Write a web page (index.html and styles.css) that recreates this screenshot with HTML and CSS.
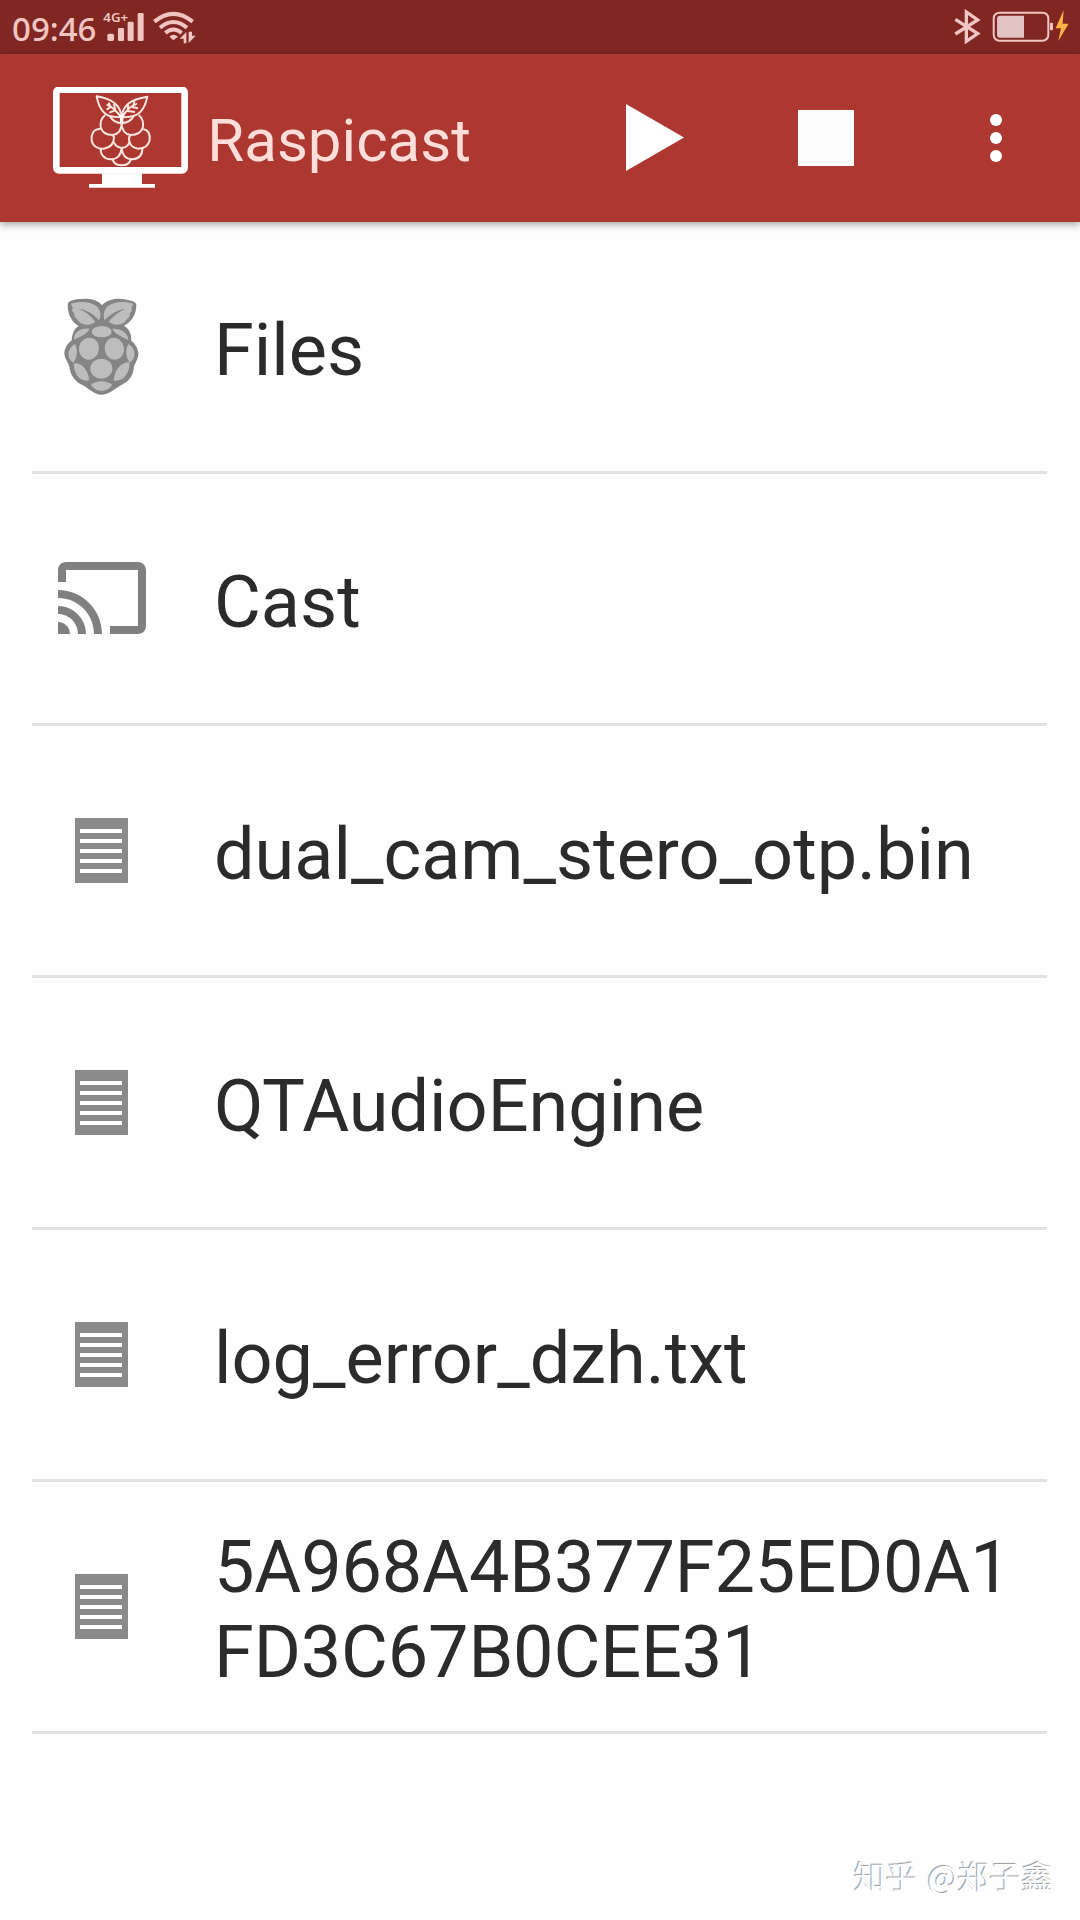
FILE: index.html
```
<!DOCTYPE html>
<html lang="zh">
<head>
    <meta charset="UTF-8">
    <meta name="viewport" content="width=device-width, initial-scale=1.0">
    <title>Raspicast</title>
    <link rel="stylesheet" href="styles.css">
</head>
<body>
    <div class="status-bar">
        <span class="time">09:46</span>
        <svg class="signal" viewBox="310 30 126 100">
            <text x="311" y="67" class="net">4G+</text>
            <rect x="323" y="101" width="20" height="22" rx="5"/>
            <rect x="355" y="84" width="18" height="39" rx="4"/>
            <rect x="384" y="65" width="18" height="58" rx="4"/>
            <rect x="414" y="39" width="18" height="84" rx="4"/>
        </svg>
        <svg class="wifi" viewBox="460 30 132 105">
            <g fill="none" stroke="#f1c6c2" stroke-width="12">
                <path d="M464 65Q521 18 579 65"/>
                <path d="M481 83Q521 49 562 83"/>
                <path d="M497 99Q521 78 546 99"/>
            </g>
            <path d="M509 110Q521 99 535 110L521 121ZM540 116L560 96V130H552V116ZM567 95V129L588 107H577V95Z"/>
        </svg>
        <svg class="bluetooth" viewBox="100 28 86 106">
            <path d="M107 59L174 102L140 125V37L174 61L107 103" fill="none" stroke="#f1c6c2" stroke-width="10"/>
        </svg>
        <svg class="battery" viewBox="216 28 234 106">
            <rect x="221" y="39" width="164" height="84" rx="17" fill="none" stroke="#f1c6c2" stroke-width="6"/>
            <path d="M240 48H312V114H240Q231 114 231 105V57Q231 48 240 48Z" fill="#e3c3c2"/>
            <rect x="390" y="69" width="9" height="23" rx="3"/>
            <path d="M431 32L407 86H423L415 124L446 72H428Z" fill="#ffb545"/>
        </svg>
    </div>

    <div class="toolbar">
        <svg class="logo" viewBox="39 37 406 303">
            <rect x="49" y="45" width="385" height="242" rx="8" fill="none" stroke="#fff" stroke-width="20"/>
            <path d="M186 296H306V328H345V339H147V328H186Z" fill="#fff"/>
            <g class="berry">
                <path d="M245 128C242 94 222 74 170 65C177 101 193 125 222 126C233 126 239 129 245 128Z"/>
                <path d="M245 128C248 94 269 74 322 66C315 101 299 125 268 126C257 126 251 129 245 128Z"/>
                <path d="M200 90Q225 100 245 131Q262 98 291 87M206 84L212 97L200 105M222 88L226 107L208 114M283 80L279 98L294 101M265 90L263 109L285 112"/>
                <path d="M196 121Q179 134 182 157Q188 181 218 181Q245 177 245 146Q220 144 210 125"/>
                <path d="M296 121Q312 134 309 157Q302 181 272 181Q245 177 245 146Q271 144 281 125"/>
                <path d="M182 163C160 161 153 180 155 197C158 215 175 224 192 222C211 219 222 206 222 188L218 181"/>
                <path d="M309 163C326 166 331 180 329 197C325 215 311 222 295 222C276 219 266 206 267 188L272 181"/>
                <path d="M222 203Q226 217 245 220Q264 218 268 203"/>
                <path d="M182 221C181 241 194 254 213 254C232 253 243 241 245 220C247 241 258 254 278 254C297 252 308 241 307 220"/>
                <path d="M217 254Q224 272 245 272Q267 272 273 254"/>
            </g>
            <path d="M232 112L245 123L258 112L250 128V146H240V128Z" fill="#fff"/>
        </svg>
        <h1 class="title">Raspicast</h1>
        <svg class="play" viewBox="0 0 58 67"><path d="M0 0L58 33.5L0 67Z"/></svg>
        <div class="stop"></div>
        <div class="more"><i></i><i></i><i></i></div>
    </div>

    <div class="list">
        <div class="row">
            <div class="icon">
                <svg class="raspberry" viewBox="74 52 225 291">
                    <path fill="#858585" d="M188 74C175 54 139 51 112 56C99 59 85 61 85 73C85 102 98 125 118 136C102 145 98 164 97 179C83 190 75 203 75 221C77 235 86 244 90 257C92 282 105 302 129 313C149 323 163 342 187 342C209 342 223 326 246 313C271 301 282 285 284 257C289 244 298 233 297 217C296 201 286 188 276 180C276 159 270 144 254 135C278 123 291 102 291 71C285 60 270 60 257 56C229 51 203 57 188 74Z"/>
                    <g fill="#bdbdbd">
                        <path d="M95 69C122 61 154 62 172 77C185 90 186 108 179 119C160 97 140 88 119 84C140 94 157 107 168 123C147 139 123 133 113 116L106 108L104 98L98 90L100 81Z"/>
                        <path d="M282 69C255 61 223 62 205 77C192 90 191 108 196 119C216 97 237 88 258 84C237 94 220 107 208 123C230 139 253 133 263 116L270 108L272 98L278 90L276 81Z"/>
                        <ellipse cx="187" cy="153" rx="30" ry="17"/>
                        <path d="M104 177C104 154 123 141 151 144C143 160 125 167 104 177Z"/>
                        <path d="M267 178C267 158 248 143 219 144C226 160 246 167 267 178Z"/>
                        <ellipse cx="149" cy="204" rx="30" ry="33" transform="rotate(12 149 204)"/>
                        <ellipse cx="225" cy="204" rx="29" ry="33" transform="rotate(-12 225 204)"/>
                        <path d="M107 190C116 208 114 230 102 246C80 233 83 203 107 190Z"/>
                        <path d="M267 190C257 208 259 230 271 246C292 233 290 203 267 190Z"/>
                        <ellipse cx="186" cy="264" rx="33" ry="30"/>
                        <path d="M104 248C126 245 148 268 149 299C121 306 102 277 104 248Z"/>
                        <path d="M270 245C248 243 224 268 223 300C251 305 273 276 270 245Z"/>
                        <path d="M155 312C171 298 203 298 218 312C205 336 168 336 155 312Z"/>
                    </g>
                </svg>
            </div>
            <div class="name">Files</div>
        </div>
        <div class="row">
            <div class="icon">
                <svg class="cast" viewBox="0 0 24 24">
                    <path d="M21 3H3c-1.100 0-2 .9-2 2v3h2V5h18v14h-7v2h7c1.100 0 2-.9 2-2V5c0-1.100-.9-2-2-2zM1 18v3h3c0-1.660-1.340-3-3-3zm0-4v2c2.760 0 5 2.240 5 5h2c0-3.870-3.130-7-7-7zm0-4v2c4.970 0 9 4.030 9 9h2c0-6.080-4.930-11-11-11z"/>
                </svg>
            </div>
            <div class="name">Cast</div>
        </div>
        <div class="row">
            <div class="icon"><div class="doc"><i></i><i></i><i></i><i></i><i></i></div></div>
            <div class="name">dual_cam_stero_otp.bin</div>
        </div>
        <div class="row">
            <div class="icon"><div class="doc"><i></i><i></i><i></i><i></i><i></i></div></div>
            <div class="name">QTAudioEngine</div>
        </div>
        <div class="row">
            <div class="icon"><div class="doc"><i></i><i></i><i></i><i></i><i></i></div></div>
            <div class="name">log_error_dzh.txt</div>
        </div>
        <div class="row">
            <div class="icon"><div class="doc"><i></i><i></i><i></i><i></i><i></i></div></div>
            <div class="name hash">5A968A4B377F25ED0A1FD3C67B0CEE31</div>
        </div>
    </div>

    <div class="watermark">知乎 @郑子鑫</div>
</body>
</html>
```
FILE: styles.css
```
* {
    box-sizing: border-box;
}
body {
    margin: 0;
    height: 1920px;
    background: #fefefe;
    color: #2b2b2b;
    display: flex;
    flex-direction: column;
    font-family: Roboto, "Noto Sans CJK SC", sans-serif;
    overflow: hidden;
}
svg {
    display: block;
    flex-shrink: 0;
}

/* status bar */
.status-bar {
    height: 54px;
    background: #812723;
    color: #f1c6c2;
    fill: #f1c6c2;
    display: flex;
    align-items: flex-start;
    padding-left: 12px;
}
.time {
    width: 91px;
    font-family: "Noto Sans", sans-serif;
    font-size: 33px;
    font-weight: 500;
    line-height: 57px;
}
.signal {
    width: 42px;
    height: 33.300px;
    margin-top: 10px;
    overflow: visible;
}
.net {
    font-family: "Noto Sans", sans-serif;
    font-size: 40px;
    font-weight: 600;
}
.wifi {
    width: 44px;
    height: 35px;
    margin: 10px 0 0 8px;
}
.bluetooth {
    width: 28.700px;
    height: 35.300px;
    margin: 9px 10px 0 auto;
}
.battery {
    width: 78px;
    height: 35.300px;
    margin: 9px 10px 0 0;
}

/* toolbar */
.toolbar {
    height: 168px;
    background: #ad3731;
    display: flex;
    align-items: flex-start;
    padding-left: 53px;
    box-shadow: 0 2px 8px rgba(0, 0, 0, 0.4);
}
.logo {
    width: 135.300px;
    height: 101px;
    margin-top: 33px;
}
.berry {
    fill: none;
    stroke: #ffe6df;
    stroke-width: 6;
    stroke-linejoin: round;
}
.title {
    width: 419px;
    margin: 51px 0 0 19px;
    color: #ffdeda;
    font-size: 60px;
    font-weight: 400;
    line-height: 71px;
}
.play {
    width: 58px;
    height: 67px;
    margin-top: 50px;
    fill: #fff;
}
.stop {
    width: 56px;
    height: 56px;
    margin: 56px 0 0 114px;
    background: #fdfdfd;
}
.more {
    display: flex;
    flex-direction: column;
    gap: 6px;
    margin: 60px 0 0 136px;
}
.more i {
    width: 12px;
    height: 12px;
    border-radius: 50%;
    background: #fff;
}

/* list */
.list {
    padding: 0 33px 0 32px;
}
.row {
    height: 252px;
    border-bottom: 3px solid #e1e1e1;
    display: flex;
    align-items: center;
}
.icon {
    width: 139px;
    margin-right: 43px;
    padding-bottom: 1px;
    flex-shrink: 0;
    display: flex;
    justify-content: center;
}
.raspberry {
    width: 75px;
    height: 97px;
}
.cast {
    width: 96px;
    height: 96px;
    fill: #808080;
}
.doc {
    width: 53px;
    height: 65px;
    padding: 11px 6px 0 5px;
    background: #8a8a8a;
    display: flex;
    flex-direction: column;
    gap: 6px;
}
.doc i {
    height: 4px;
    background: #fff;
}
.name {
    padding: 7px 16px 0 0;
    font-size: 72px;
    line-height: 85px;
    word-break: break-all;
}
.hash {
    letter-spacing: -0.15px;
}

.watermark {
    margin: auto 27px 25px auto;
    color: #fff;
    font-family: "Noto Sans CJK SC", sans-serif;
    font-size: 32px;
    line-height: 40px;
    word-spacing: 3px;
    letter-spacing: -0.2px;
    text-shadow: -1px -1px 1px #999;
}
```
